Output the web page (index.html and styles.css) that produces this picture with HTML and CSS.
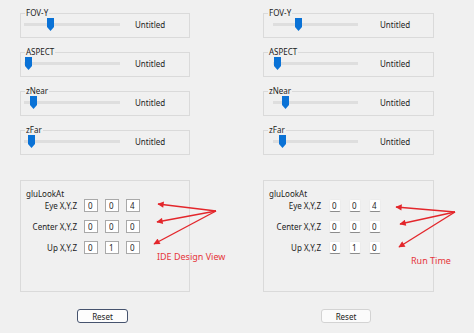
FILE: index.html
```html
<!DOCTYPE html>
<html>
<head>
<meta charset="utf-8">
<link rel="stylesheet" href="styles.css">
</head>
<body>
<div class="screen">
  <section class="col col-ide">
    <div class="group slider-group">
      <span class="legend">FOV-Y</span>
      <div class="slider-row">
        <div class="slider"><div class="track"></div><svg class="thumb" style="left:23px" viewBox="0 0 7 13"><path d="M0 0H7V9L3.5 13L0 9Z"/></svg></div>
        <span class="value">Untitled</span>
      </div>
    </div>
    <div class="group slider-group">
      <span class="legend">ASPECT</span>
      <div class="slider-row">
        <div class="slider"><div class="track"></div><svg class="thumb" style="left:1px" viewBox="0 0 7 13"><path d="M0 0H7V9L3.5 13L0 9Z"/></svg></div>
        <span class="value">Untitled</span>
      </div>
    </div>
    <div class="group slider-group">
      <span class="legend">zNear</span>
      <div class="slider-row">
        <div class="slider"><div class="track"></div><svg class="thumb" style="left:6px" viewBox="0 0 7 13"><path d="M0 0H7V9L3.5 13L0 9Z"/></svg></div>
        <span class="value">Untitled</span>
      </div>
    </div>
    <div class="group slider-group">
      <span class="legend">zFar</span>
      <div class="slider-row">
        <div class="slider"><div class="track"></div><svg class="thumb" style="left:4px" viewBox="0 0 7 13"><path d="M0 0H7V9L3.5 13L0 9Z"/></svg></div>
        <span class="value">Untitled</span>
      </div>
    </div>
    <div class="group look-group">
      <span class="legend">gluLookAt</span>
      <div class="look-rows">
        <div class="look-row"><span class="look-label">Eye X,Y,Z</span><div class="boxes"><input class="num" value="0" readonly><input class="num" value="0" readonly><input class="num" value="4" readonly></div></div>
        <div class="look-row"><span class="look-label">Center X,Y,Z</span><div class="boxes"><input class="num" value="0" readonly><input class="num" value="0" readonly><input class="num" value="0" readonly></div></div>
        <div class="look-row"><span class="look-label">Up X,Y,Z</span><div class="boxes"><input class="num" value="0" readonly><input class="num" value="1" readonly><input class="num" value="0" readonly></div></div>
      </div>
    </div>
    <div class="btn-row"><button class="btn">Reset</button></div>
  </section>

  <section class="col col-run">
    <div class="group slider-group">
      <span class="legend">FOV-Y</span>
      <div class="slider-row">
        <div class="slider"><div class="track"></div><svg class="thumb" style="left:22px" viewBox="0 0 7 13"><path d="M0 0H7V9L3.5 13L0 9Z"/></svg></div>
        <span class="value">Untitled</span>
      </div>
    </div>
    <div class="group slider-group">
      <span class="legend">ASPECT</span>
      <div class="slider-row">
        <div class="slider"><div class="track"></div><svg class="thumb" style="left:1px" viewBox="0 0 7 13"><path d="M0 0H7V9L3.5 13L0 9Z"/></svg></div>
        <span class="value">Untitled</span>
      </div>
    </div>
    <div class="group slider-group">
      <span class="legend">zNear</span>
      <div class="slider-row">
        <div class="slider"><div class="track"></div><svg class="thumb" style="left:9px" viewBox="0 0 7 13"><path d="M0 0H7V9L3.5 13L0 9Z"/></svg></div>
        <span class="value">Untitled</span>
      </div>
    </div>
    <div class="group slider-group">
      <span class="legend">zFar</span>
      <div class="slider-row">
        <div class="slider"><div class="track"></div><svg class="thumb" style="left:6px" viewBox="0 0 7 13"><path d="M0 0H7V9L3.5 13L0 9Z"/></svg></div>
        <span class="value">Untitled</span>
      </div>
    </div>
    <div class="group look-group">
      <span class="legend">gluLookAt</span>
      <div class="look-rows">
        <div class="look-row"><span class="look-label">Eye X,Y,Z</span><div class="boxes"><input class="num" value="0" readonly><input class="num" value="0" readonly><input class="num" value="4" readonly></div></div>
        <div class="look-row"><span class="look-label">Center X,Y,Z</span><div class="boxes"><input class="num" value="0" readonly><input class="num" value="0" readonly><input class="num" value="0" readonly></div></div>
        <div class="look-row"><span class="look-label">Up X,Y,Z</span><div class="boxes"><input class="num" value="0" readonly><input class="num" value="1" readonly><input class="num" value="0" readonly></div></div>
      </div>
    </div>
    <div class="btn-row"><button class="btn">Reset</button></div>
  </section>
</div>

<svg class="arrows" width="474" height="333" viewBox="0 0 474 333">
  <defs>
    <marker id="ah" viewBox="0 0 10 10" refX="9" refY="5" markerWidth="5.5" markerHeight="4.5" orient="auto">
      <path d="M0 0L10 5L0 10Z" fill="#e3262b"/>
    </marker>
  </defs>
  <g stroke="#e3262b" stroke-width="1.4" fill="none" marker-end="url(#ah)">
    <line x1="216" y1="211" x2="158" y2="204"/>
    <line x1="216" y1="211" x2="157" y2="222"/>
    <line x1="216" y1="211" x2="154" y2="244"/>
    <line x1="455" y1="212" x2="396" y2="207"/>
    <line x1="455" y1="212" x2="400" y2="224"/>
    <line x1="455" y1="212" x2="399" y2="247"/>
  </g>
</svg>
<span class="note note-ide">IDE Design View</span>
<span class="note note-run">Run Time</span>
</body>
</html>
```
FILE: styles.css
```css
html, body {
  margin: 0;
  padding: 0;
}
body {
  width: 474px;
  height: 333px;
  overflow: hidden;
  position: relative;
  background: #f0f0f0;
  font-family: "Noto Sans", "DejaVu Sans", sans-serif;
  font-size: 8px;
  color: #1c1c1c;
}
.screen {
  display: flex;
}
.col {
  width: 237px;
  box-sizing: border-box;
  padding-top: 13px;
  display: flex;
  flex-direction: column;
}
.col-ide {
  padding-left: 20px;
}
.col-run {
  padding-left: 26px;
}
.group {
  border: 1px solid #dadada;
  box-sizing: border-box;
  width: 170px;
}
.col-run .group {
  width: 171px;
}
.group + .group {
  margin-top: 14px;
}
.legend {
  display: table;
  margin: -7px 0 -1px 4px;
  padding: 0 1px;
  line-height: 12px;
  background: #f0f0f0;
}
.slider-group {
  padding-bottom: 6px;
}
.slider-row {
  display: flex;
  align-items: center;
  height: 13px;
}
.slider {
  position: relative;
  display: flex;
  align-items: center;
  height: 13px;
  width: 96px;
  margin-left: 3px;
}
.col-run .slider {
  width: 85px;
  margin-left: 9px;
}
.track {
  flex: 1;
  height: 3px;
  background: #dedede;
}
.thumb {
  position: absolute;
  top: 0;
  width: 7px;
  height: 13px;
  fill: #0a72d6;
}
.value {
  margin-left: 15px;
}
.col-run .value {
  margin-left: 22px;
}
.look-group {
  padding: 14px 0 37px;
}
.group + .look-group {
  margin-top: 25px;
}
.look-rows {
  display: flex;
  flex-direction: column;
  gap: 8px;
}
.look-row {
  display: flex;
  align-items: center;
  height: 13px;
}
.look-label {
  width: 56px;
  text-align: right;
  white-space: nowrap;
}
.col-run .look-label {
  width: 57px;
}
.boxes {
  display: flex;
  gap: 7px;
  margin-left: 7px;
}
.col-run .boxes {
  gap: 8px;
  margin-left: 8px;
}
.num {
  width: 14px;
  height: 13px;
  box-sizing: border-box;
  margin: 0;
  padding: 0 0 0 3px;
  border: 1px solid #a9a9a9;
  background: #ffffff;
  font: inherit;
  color: #1c1c1c;
  outline: none;
}
.col-run .num {
  width: 12px;
  padding-left: 2px;
  border: 1px solid #ececec;
  border-bottom: 1px solid #8c8c8c;
  border-radius: 2px;
}
.btn-row {
  margin-top: 17px;
  padding-left: 57px;
}
.col-run .btn-row {
  padding-left: 58px;
}
.btn {
  width: 51px;
  height: 14px;
  margin: 0;
  padding: 0;
  box-sizing: border-box;
  font: inherit;
  color: #1c1c1c;
  background: #fdfdfd;
  border: 1px solid #46536e;
  border-radius: 3px;
}
.col-run .btn {
  width: 50px;
  border-color: #d3d3d3;
  background: #fbfbfb;
}
.arrows {
  position: absolute;
  top: 0;
  left: 0;
  pointer-events: none;
}
.note {
  position: absolute;
  color: #e6353b;
  font-size: 9px;
  line-height: 12px;
  white-space: nowrap;
}
.note-ide {
  left: 157px;
  top: 251px;
}
.note-run {
  left: 411px;
  top: 255px;
}
```
